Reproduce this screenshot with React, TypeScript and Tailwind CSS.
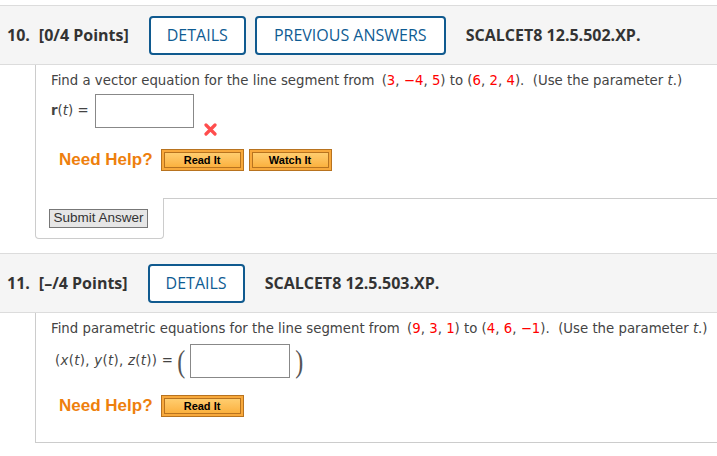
import React from "react";

const sans = { fontFamily: '"Open Sans", "Noto Sans", sans-serif' };
const verd = { fontFamily: '"DejaVu Sans", Verdana, sans-serif' };
const arial = { fontFamily: '"Liberation Sans", Arial, sans-serif' };

function Header({ num, pts, buttons, code }: { num: string; pts: string; buttons: { label: string; w: string }[]; code: string }) {
  return (
    <div
      className="h-[60px] bg-[#f5f5f5] border-y border-[#dcdcdc] flex items-center pl-[7px] text-[16px] font-bold text-[#333]"
      style={sans}
    >
      <span className="mr-[9px]">{num}</span>
      <span className="mr-[20px]">{pts}</span>
      {buttons.map((b) => (
        <div
          key={b.label}
          className={`${b.w} h-[39px] mr-[9px] border-2 border-[#105a8f] rounded-[4px] bg-white flex items-center justify-center font-normal text-[16px] text-[#0f5c93]`}
        >
          {b.label}
        </div>
      ))}
      <span className="ml-[11px]">{code}</span>
    </div>
  );
}

function HelpBtn({ label, w }: { label: string; w: string }) {
  return (
    <div className={`${w} h-[22px] border border-[#b8731f] bg-[#f8a93c] p-[2px]`}>
      <div
        className="h-full border border-[#b8731f] bg-gradient-to-b from-[#ffcd6e] to-[#fbb13e] flex items-center justify-center text-[11px] font-bold text-black"
        style={arial}
      >
        {label}
      </div>
    </div>
  );
}

const R = ({ children }: { children: React.ReactNode }) => <span className="text-[#f00]">{children}</span>;

function Cross() {
  return (
    <svg width="13" height="13" viewBox="0 0 13 13">
      <path d="M2 2 L11 11 M11 2 L2 11" stroke="#ff4d4d" strokeWidth="3.2" strokeLinecap="round" />
    </svg>
  );
}

export default function App() {
  return (
    <div className="w-[717px] h-[456px] bg-white pt-[5px] overflow-hidden">
      <Header
        num="10."
        pts="[0/4 Points]"
        buttons={[
          { label: "DETAILS", w: "w-[97px]" },
          { label: "PREVIOUS ANSWERS", w: "w-[191px]" },
        ]}
        code="SCALCET8 12.5.502.XP."
      />
      <div className="ml-[35px] border-l border-[#ccc] pl-[15px] pt-[7px] h-[133px] text-[13.3px] text-[#444]" style={verd}>
        <div className="h-[18px] leading-[18px] whitespace-nowrap">
          Find a vector equation for the line segment from{" "}
          <span className="ml-[3px]">(</span>
          <R>3</R>, <R>−4</R>, <R>5</R>) to (<R>6</R>, <R>2</R>, <R>4</R>).&nbsp; (Use the parameter <i>t</i>.)
        </div>
        <div className="mt-[4px] flex items-center h-[34px]">
          <span className="mr-[6px]">
            <b>r</b>(<i>t</i>) =
          </span>
          <div className="w-[99px] h-[34px] border border-[#888] bg-white" />
        </div>
        <div className="ml-[153px] mt-[-5px] h-[13px]">
          <Cross />
        </div>
        <div className="flex items-center mt-[11px] ml-[8px]">
          <span className="text-[17px] font-bold text-[#ee7f0d] mr-[8px]" style={arial}>
            Need Help?
          </span>
          <HelpBtn label="Read It" w="w-[83px]" />
          <div className="w-[5px]" />
          <HelpBtn label="Watch It" w="w-[83px]" />
        </div>
      </div>
      <div className="flex">
        <div className="ml-[35px] w-[129px] h-[41px] border-l border-b border-r border-[#ccc] rounded-b-[4px] pl-[13px] pt-[11px]">
          <div
            className="w-[99px] h-[19px] border border-[#777] bg-[#e6e6e6] flex items-center justify-center text-[13.5px] text-[#333]"
            style={arial}
          >
            Submit Answer
          </div>
        </div>
        <div className="flex-1 border-t border-[#ccc]" />
      </div>
      <div className="h-[14px]" />
      <Header num="11." pts="[–/4 Points]" buttons={[{ label: "DETAILS", w: "w-[97px]" }]} code="SCALCET8 12.5.503.XP." />
      <div className="ml-[35px] border-l border-b border-[#ccc] pl-[15px] pt-[7px] h-[130px] text-[13.3px] text-[#444]" style={verd}>
        <div className="h-[18px] leading-[18px] whitespace-nowrap">
          Find parametric equations for the line segment from{" "}
          <span className="ml-[3px]">(</span>
          <R>9</R>, <R>3</R>, <R>1</R>) to (<R>4</R>, <R>6</R>, <R>−1</R>).&nbsp; (Use the parameter <i>t</i>.)
        </div>
        <div className="mt-[6px] flex items-center h-[34px]">
          <span className="ml-[4px] mr-[3px] tracking-[0.3px]">
            (<i>x</i>(<i>t</i>), <i>y</i>(<i>t</i>), <i>z</i>(<i>t</i>)) =
          </span>
          <span className="text-[32px] text-[#555] leading-none mr-[3px]" style={{ fontFamily: '"Liberation Serif", serif', transform: "scaleX(0.75)" }}>(</span>
          <div className="w-[100px] h-[34px] border border-[#888] bg-white" />
          <span className="text-[32px] text-[#555] leading-none ml-[4px]" style={{ fontFamily: '"Liberation Serif", serif', transform: "scaleX(0.75)" }}>)</span>
        </div>
        <div className="flex items-center mt-[15px] ml-[8px]">
          <span className="text-[17px] font-bold text-[#ee7f0d] mr-[8px]" style={arial}>
            Need Help?
          </span>
          <HelpBtn label="Read It" w="w-[83px]" />
        </div>
      </div>
    </div>
  );
}
